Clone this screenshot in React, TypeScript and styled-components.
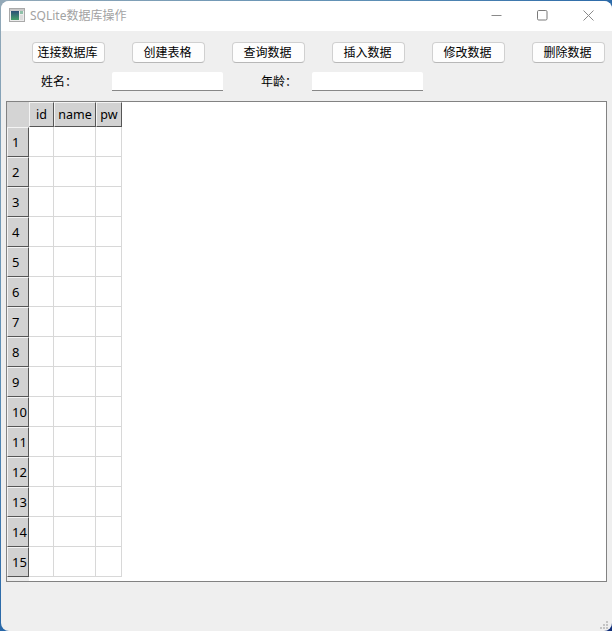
import React from 'react'
import styled, { createGlobalStyle } from 'styled-components'

const GlobalStyle = createGlobalStyle`
  html, body {
    margin: 0;
    padding: 0;
    background: #fff;
  }
`

const Desktop = styled.div`
  width: 612px;
  height: 631px;
  overflow: hidden;
  background: linear-gradient(135deg, #93a9b8 0%, #5d8fb5 30%, #1d5fa5 55%, #1a3f8f 75%, #12307a 100%);
  padding: 1px 0 0 1px;
  box-sizing: border-box;
`

const Window = styled.div`
  width: 611px;
  height: 630px;
  border-radius: 8px;
  overflow: hidden;
  background: #efefef;
  display: flex;
  flex-direction: column;
  font-family: "Noto Sans", "Noto Sans CJK SC", sans-serif;
  color: #000;
  position: relative;
`

const TitleBar = styled.div`
  height: 30px;
  box-sizing: border-box;
  padding: 0 1px 2px 8px;
  flex: none;
  background: #fff;
  display: flex;
  align-items: center;
`

const Title = styled.span`
  margin-left: 5px;
  font-size: 12px;
  color: #a2a2a2;
  flex: 1;
`

const WinControls = styled.div`
  display: flex;
`

const WinButton = styled.div`
  width: 46px;
  height: 28px;
  display: flex;
  align-items: center;
  justify-content: center;
`

const Toolbar = styled.div`
  display: flex;
  gap: 27px;
  padding: 11px 0 0 31px;
`

const ActionButton = styled.button`
  width: 73px;
  height: 21px;
  padding: 0 2px 0 0;
  box-sizing: border-box;
  background: #fdfdfd;
  border: 1px solid #d0d0d0;
  border-bottom-color: #b8b8b8;
  border-radius: 4px;
  font: inherit;
  font-size: 12px;
  line-height: 19px;
  color: #000;
`

const FormRow = styled.div`
  display: flex;
  align-items: flex-start;
  height: 19px;
  margin-top: 9px;
  padding-left: 40px;
`

const FieldLabel = styled.label`
  width: 71px;
  font-size: 12px;
  line-height: 19px;
  flex: none;
`

const AgeLabel = styled(FieldLabel)`
  width: 51px;
  margin-left: 38px;
`

const TextInput = styled.input`
  width: 111px;
  height: 19px;
  padding: 0;
  box-sizing: border-box;
  background: #fff;
  border: none;
  border-bottom: 1px solid #878787;
  border-radius: 2px 2px 0 0;
  flex: none;
`

const TableFrame = styled.div`
  margin: 10px 0 0 5px;
  width: 601px;
  height: 481px;
  box-sizing: border-box;
  border: 1px solid #828282;
  background: #fff;
  flex: none;
`

const Grid = styled.div`
  display: grid;
  grid-template-columns: 22px 25px 42px 26px;
  grid-template-rows: 25px repeat(15, 30px) 4px;
  width: max-content;
`

const Corner = styled.div`
  background: #d4d4d4;
`

const HeaderCell = styled.div`
  background: #d2d2d2;
  box-sizing: border-box;
  border-top: 1px solid #f4f4f4;
  border-left: 1px solid #f4f4f4;
  border-right: 1px solid #555;
  border-bottom: 1px solid #555;
  font-size: 12.5px;
  line-height: 23px;
  text-align: center;
`

const RowHeader = styled(HeaderCell)`
  font-size: 13px;
  line-height: 29px;
  text-align: left;
  padding-left: 4px;
`

const Cell = styled.div`
  box-sizing: border-box;
  border-right: 1px solid #d8d8d8;
  border-bottom: 1px solid #d8d8d8;
`

const Gutter = styled.div`
  background: #ececec;
`

const Footer = styled.div`
  flex: 1;
`

const SizeGrip = styled.svg`
  position: absolute;
  right: 3px;
  bottom: 1px;
`

const ACTIONS = ['连接数据库', '创建表格', '查询数据', '插入数据', '修改数据', '删除数据']
const COLUMNS = ['id', 'name', 'pw']
const ROWS = Array.from({ length: 15 }, (_, i) => i + 1)

const AppIcon = () => (
  <svg width="16" height="14" viewBox="0 0 16 14">
    <defs>
      <linearGradient id="pane" x1="0" y1="0" x2="0" y2="1">
        <stop offset="0" stopColor="#2b4f78" />
        <stop offset="1" stopColor="#46a06a" />
      </linearGradient>
    </defs>
    <rect x="0.5" y="0.5" width="15" height="13" fill="#ececec" stroke="#a9a9a9" />
    <rect x="1" y="1" width="14" height="2" fill="#c9c9c9" />
    <rect x="2" y="3" width="8" height="9" fill="url(#pane)" />
    <rect x="11" y="3" width="3" height="3" fill="#8fc0a8" />
    <rect x="11" y="7" width="3" height="5" fill="#dcdcdc" />
  </svg>
)

const App = () => (
  <Desktop>
    <GlobalStyle />
    <Window>
      <TitleBar>
        <AppIcon />
        <Title>SQLite数据库操作</Title>
        <WinControls>
          <WinButton>
            <svg width="11" height="11" viewBox="0 0 11 11">
              <path d="M0.5 5.5H10.5" stroke="#8a8a8a" fill="none" />
            </svg>
          </WinButton>
          <WinButton>
            <svg width="11" height="11" viewBox="0 0 11 11">
              <rect x="0.5" y="0.5" width="9.5" height="9.5" rx="1.2" stroke="#7a7a7a" fill="none" />
            </svg>
          </WinButton>
          <WinButton>
            <svg width="11" height="11" viewBox="0 0 11 11">
              <path d="M0.5 0.5L10.5 10.5M10.5 0.5L0.5 10.5" stroke="#8a8a8a" fill="none" />
            </svg>
          </WinButton>
        </WinControls>
      </TitleBar>
      <Toolbar>
        {ACTIONS.map((label) => (
          <ActionButton key={label}>{label}</ActionButton>
        ))}
      </Toolbar>
      <FormRow>
        <FieldLabel>姓名：</FieldLabel>
        <TextInput />
        <AgeLabel>年龄：</AgeLabel>
        <TextInput />
      </FormRow>
      <TableFrame>
        <Grid>
          <Corner />
          {COLUMNS.map((col) => (
            <HeaderCell key={col}>{col}</HeaderCell>
          ))}
          {ROWS.map((row) => (
            <React.Fragment key={row}>
              <RowHeader>{row}</RowHeader>
              {COLUMNS.map((col) => (
                <Cell key={col} />
              ))}
            </React.Fragment>
          ))}
          <Gutter />
        </Grid>
      </TableFrame>
      <Footer />
      <SizeGrip width="9" height="9" viewBox="0 0 9 9">
        <path d="M6 0h2v2H6zM3 3h2v2H3zM6 3h2v2H6zM0 6h2v2H0zM3 6h2v2H3zM6 6h2v2H6z" fill="#c4c4c4" />
      </SizeGrip>
    </Window>
  </Desktop>
)

export default App
